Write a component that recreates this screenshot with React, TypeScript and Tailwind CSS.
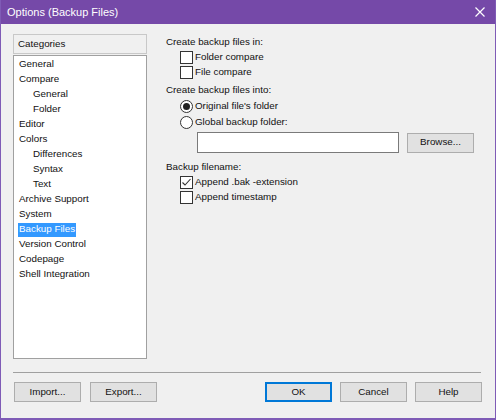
import { useState } from 'react'

const categories: { label: string; sub?: boolean }[] = [
  { label: 'General' },
  { label: 'Compare' },
  { label: 'General', sub: true },
  { label: 'Folder', sub: true },
  { label: 'Editor' },
  { label: 'Colors' },
  { label: 'Differences', sub: true },
  { label: 'Syntax', sub: true },
  { label: 'Text', sub: true },
  { label: 'Archive Support' },
  { label: 'System' },
  { label: 'Backup Files' },
  { label: 'Version Control' },
  { label: 'Codepage' },
  { label: 'Shell Integration' },
]

const CheckBox = ({ label, checked, onClick }: { label: string; checked: boolean; onClick: () => void }) => (
  <div className="flex items-center h-[15px] gap-[2px] cursor-default" onClick={onClick}>
    <div className="w-[13px] h-[13px] border border-[#333] bg-white flex items-center justify-center">
      {checked && (
        <svg width="11" height="11" viewBox="0 0 11 11">
          <path d="M1.5 5.5 L4 8 L9.5 2" fill="none" stroke="#333" strokeWidth="1.1" />
        </svg>
      )}
    </div>
    <span>{label}</span>
  </div>
)

const Radio = ({ label, checked, onClick }: { label: string; checked: boolean; onClick: () => void }) => (
  <div className="flex items-center h-[16px] gap-[2px] cursor-default" onClick={onClick}>
    <div className="w-[13px] h-[13px] rounded-full border border-[#333] bg-white flex items-center justify-center">
      {checked && <div className="w-[7px] h-[7px] rounded-full bg-[#222]" />}
    </div>
    <span>{label}</span>
  </div>
)

const Button = ({ label, def }: { label: string; def?: boolean }) => (
  <button
    className={
      def
        ? 'w-[67px] h-[20px] bg-[#e1e1e1] border-2 border-[#0078d7] text-[#111]'
        : 'w-[67px] h-[20px] bg-[#e1e1e1] border border-[#adadad] text-[#111]'
    }
  >
    {label}
  </button>
)

const App = () => {
  const [selected, setSelected] = useState(11)
  const [folderCompare, setFolderCompare] = useState(false)
  const [fileCompare, setFileCompare] = useState(false)
  const [target, setTarget] = useState('original')
  const [bak, setBak] = useState(true)
  const [stamp, setStamp] = useState(false)

  return (
    <div
      className="w-[496px] h-[420px] flex flex-col bg-[#f0f0f0] border-x border-b-2 border-[#7f5bb6] text-[9.8px] text-[#111]"
      style={{ fontFamily: '"Liberation Sans", Arial, sans-serif' }}
    >
      {/* title bar */}
      <div className="h-[24px] bg-[#7549a8] flex items-center justify-between pl-[6px] pr-[10px] text-white text-[11px] shrink-0">
        <span>Options (Backup Files)</span>
        <svg width="10" height="10" viewBox="0 0 10 10">
          <path d="M0.5 0.5 L9.5 9.5 M9.5 0.5 L0.5 9.5" stroke="#fff" strokeWidth="1.2" />
        </svg>
      </div>

      <div className="flex-1 flex flex-col px-[12px] pt-[10px]">
        <div className="flex flex-1">
          {/* categories */}
          <div className="w-[134px] h-[325px] flex flex-col">
            <div className="h-[20px] border border-[#c8c8c8] bg-[#f0f0f0] flex items-center px-[4px]">Categories</div>
            <div className="flex-1 bg-white border border-[#a0a0a0] mt-[1px] pt-[1px] pl-[4px]">
              {categories.map((c, i) => (
                <div key={i} className={c.sub ? 'h-[15px] flex items-center pl-[14px]' : 'h-[15px] flex items-center'}>
                  <span
                    onClick={() => setSelected(i)}
                    className={
                      selected === i
                        ? 'bg-[#3399ff] text-white px-[1px] h-[14px] flex items-center cursor-default'
                        : 'px-[1px] h-[14px] flex items-center cursor-default'
                    }
                  >
                    {c.label}
                  </span>
                </div>
              ))}
            </div>
          </div>

          {/* settings */}
          <div className="flex-1 pl-[19px] pt-[1px] flex flex-col">
            <div className="h-[14px] flex items-center">Create backup files in:</div>
            <div className="pl-[14px] pt-[1px]">
              <CheckBox label="Folder compare" checked={folderCompare} onClick={() => setFolderCompare(!folderCompare)} />
              <CheckBox label="File compare" checked={fileCompare} onClick={() => setFileCompare(!fileCompare)} />
            </div>
            <div className="h-[14px] flex items-center mt-[3px]">Create backup files into:</div>
            <div className="pl-[14px] pt-[1px]">
              <Radio label="Original file's folder" checked={target === 'original'} onClick={() => setTarget('original')} />
              <Radio label="Global backup folder:" checked={target === 'global'} onClick={() => setTarget('global')} />
              <div className="flex items-center gap-[8px] pl-[17px] mt-[2px]">
                <input className="w-[202px] h-[21px] bg-white border border-[#7a7a7a] outline-none px-[3px]" />
                <Button label="Browse..." />
              </div>
            </div>
            <div className="h-[14px] flex items-center mt-[7px]">Backup filename:</div>
            <div className="pl-[14px] pt-[1px]">
              <CheckBox label="Append .bak -extension" checked={bak} onClick={() => setBak(!bak)} />
              <CheckBox label="Append timestamp" checked={stamp} onClick={() => setStamp(!stamp)} />
            </div>
          </div>
        </div>

        {/* separator + buttons */}
        <div className="border-t border-[#a0a0a0] mr-[2px] mt-[11px]" />
        <div className="flex items-center h-[20px] mt-[9px] mb-[16px] pl-[1px]">
          <div className="flex gap-[9px]">
            <Button label="Import..." />
            <Button label="Export..." />
          </div>
          <div className="flex gap-[8px] ml-auto mr-[1px]">
            <Button label="OK" def />
            <Button label="Cancel" />
            <Button label="Help" />
          </div>
        </div>
      </div>
    </div>
  )
}

export default App
